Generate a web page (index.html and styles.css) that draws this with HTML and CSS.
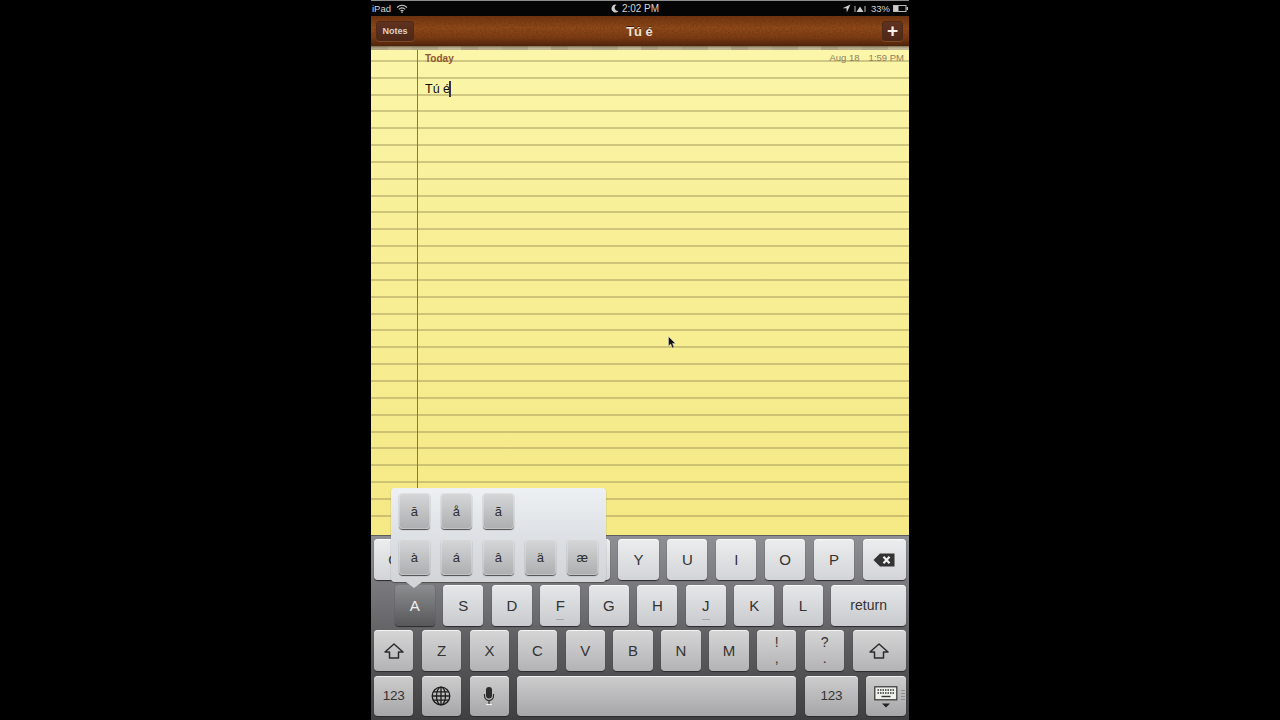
FILE: index.html
```html
<!DOCTYPE html>
<html lang="en">
<head>
<meta charset="utf-8">
<title>Notes</title>
<link rel="stylesheet" href="styles.css">
</head>
<body>
<div class="ipad">
  <div class="status">
    <div class="st-left">
      <span>iPad</span>
      <svg class="wifi" viewBox="0 0 12 9"><path d="M1 3.5C4 .8 8 .8 11 3.5M2.8 5.3C4.8 3.6 7.2 3.6 9.2 5.3M4.6 7C5.4 6.3 6.6 6.3 7.4 7" fill="none" stroke="#ccc" stroke-width="1.1"/><circle cx="6" cy="8.2" r=".8" fill="#ccc"/></svg>
    </div>
    <div class="st-mid">
      <svg class="moon" viewBox="0 0 8 9"><path d="M5.5 .8A3.9 3.9 0 1 0 7.5 7 3.3 3.3 0 0 1 5.5 .8Z" fill="#ccc"/></svg>
      <span>2:02 PM</span>
    </div>
    <div class="st-right">
      <svg class="loc" viewBox="0 0 9 9"><path d="M8.5 .5 .5 4.3H4.5L4.8 8.5Z" fill="#ccc"/></svg>
      <svg class="lock" viewBox="0 0 12 8"><path d="M1 1V7M11 1V7" stroke="#bbb" stroke-width="1"/><path d="M6 1.5 9.5 7H2.5Z" fill="#ccc"/></svg>
      <span>33%</span>
      <svg class="batt" viewBox="0 0 15 7"><rect x=".5" y=".5" width="12.5" height="6" fill="none" stroke="#bbb"/><rect x="1" y="1" width="4.5" height="5" fill="#ccc"/><rect x="13.5" y="2" width="1.5" height="3" fill="#bbb"/></svg>
    </div>
  </div>

  <div class="nav">
    <svg class="grain" aria-hidden="true"><filter id="leather"><feTurbulence type="fractalNoise" baseFrequency="0.55" numOctaves="2" seed="4"/><feColorMatrix values="0 0 0 0 .12  0 0 0 0 .03  0 0 0 0 0  1.6 0 0 0 -.55"/></filter><rect width="100%" height="100%" filter="url(#leather)"/></svg>
    <div class="nav-cell"><span class="nav-btn notes">Notes</span></div>
    <div class="title">Tú é</div>
    <div class="nav-cell end"><span class="nav-btn plus">+</span></div>
  </div>
  <div class="tear"></div>

  <div class="paper">
    <div class="meta">
      <span class="today">Today</span>
      <span class="date"><span>Aug 18</span><span>1:59 PM</span></span>
    </div>
    <div class="note"><span>Tú é</span><span class="caret"></span></div>
  </div>

  <div class="keyboard">
    <div class="row r1">
      <div class="key">Q</div><div class="key"></div><div class="key"></div><div class="key"></div><div class="key"></div><div class="key">Y</div><div class="key">U</div><div class="key">I</div><div class="key">O</div><div class="key">P</div>
      <div class="key grow">
        <svg class="ic-back" viewBox="0 0 22 14"><path d="M7 .5H21.5V13.5H7L.5 7Z" fill="#333"/><path d="M10.5 3.8 16.5 10.2M16.5 3.8 10.5 10.2" stroke="#f2f2f2" stroke-width="2.2"/></svg>
      </div>
    </div>
    <div class="row r2">
      <div class="key pressed">A</div><div class="key">S</div><div class="key">D</div><div class="key bump">F</div><div class="key">G</div><div class="key">H</div><div class="key bump">J</div><div class="key">K</div><div class="key">L</div>
      <div class="key grow word">return</div>
    </div>
    <div class="row r3">
      <div class="key wide">
        <svg class="ic-shift" viewBox="0 0 20 16"><path d="M10 1 19 9H14.5V15H5.500V9H1Z" fill="none" stroke="#2c2c2c" stroke-width="1.500" stroke-linejoin="round"/></svg>
      </div>
      <div class="key">Z</div><div class="key">X</div><div class="key">C</div><div class="key">V</div><div class="key">B</div><div class="key">N</div><div class="key">M</div>
      <div class="key punct"><span>!</span><span>,</span></div>
      <div class="key punct"><span>?</span><span>.</span></div>
      <div class="key grow">
        <svg class="ic-shift" viewBox="0 0 20 16"><path d="M10 1 19 9H14.5V15H5.500V9H1Z" fill="none" stroke="#2c2c2c" stroke-width="1.500" stroke-linejoin="round"/></svg>
      </div>
    </div>
    <div class="row r4">
      <div class="key wide num">123</div>
      <div class="key">
        <svg class="ic-globe" viewBox="0 0 20 20"><g fill="none" stroke="#1c1c1c" stroke-width="1.300"><circle cx="10" cy="10" r="8.800"/><ellipse cx="10" cy="10" rx="4.500" ry="8.800"/><path d="M10 1.200V18.800M1.200 10H18.800M2.500 5.800H17.500M2.500 14.200H17.500"/></g></svg>
      </div>
      <div class="key">
        <svg class="ic-mic" viewBox="0 0 12 20"><rect x="3" y="1" width="6" height="11.500" rx="3" fill="#2c2c2c"/><path d="M1.500 8V9.500C1.500 12.500 3.500 14.500 6 14.500S10.500 12.500 10.500 9.500V8M6 14.500V18" fill="none" stroke="#2c2c2c" stroke-width="1.200"/><path d="M3 18.500H9" stroke="#f2f2f2" stroke-width="1.200"/></svg>
      </div>
      <div class="key space"></div>
      <div class="key ret-num num">123</div>
      <div class="key grow kb-key">
        <svg class="ic-kb" viewBox="0 0 24 22"><rect x=".8" y=".8" width="22" height="13" fill="#eef0ea" stroke="#333" stroke-width="1.200"/><path d="M3.500 4H20.500M3.500 7H20.500" stroke="#333" stroke-width="1.400" stroke-dasharray="1.500 1"/><path d="M7.500 10.500H16.500" stroke="#333" stroke-width="1.400"/><path d="M8 17.500H16L12 21.500Z" fill="#222"/></svg>
      </div>
    </div>

    <div class="popup">
      <div class="pop-row">
        <div class="pop-key">ā</div><div class="pop-key">å</div><div class="pop-key">ã</div>
      </div>
      <div class="pop-row">
        <div class="pop-key">à</div><div class="pop-key">á</div><div class="pop-key">â</div><div class="pop-key">ä</div><div class="pop-key">æ</div>
      </div>
      <div class="pop-tail"></div>
    </div>
  </div>

  <svg class="cursor" viewBox="0 0 8 13"><path d="M.5 .5V10L2.700 8 4.300 12 6 11.300 4.500 7.500H7.500Z" fill="#111" stroke="#ddd" stroke-width=".5"/></svg>
</div>
</body>
</html>
```
FILE: styles.css
```css
* { box-sizing: border-box; }
html, body { margin: 0; height: 100%; background: #000; overflow: hidden; }
body { font-family: "Liberation Sans", Arial, sans-serif; }

.ipad {
  position: relative;
  width: 538px;
  height: 720px;
  margin: 0 auto;
  display: flex;
  flex-direction: column;
  background: #000;
}

/* status bar */
.status {
  height: 16px;
  flex: none;
  display: grid;
  grid-template-columns: 1fr auto 1fr;
  align-items: center;
  padding: 0 1px;
  background: #050505;
  border-top: 1px solid #8c8c8c;
  color: #d4d4d4;
  font-size: 9.5px;
  line-height: 14px;
}
.st-left, .st-mid, .st-right { display: flex; align-items: center; }
.st-left { gap: 5px; }
.st-mid { gap: 3px; padding-right: 10px; font-size: 10px; }
.st-right { justify-content: flex-end; gap: 3px; }
.wifi { width: 12px; height: 9px; }
.moon { width: 8px; height: 9px; }
.loc { width: 9px; height: 9px; }
.lock { width: 12px; height: 8px; margin-right: 2px; }
.batt { width: 15px; height: 7px; }

/* navigation */
.nav {
  position: relative;
  height: 30px;
  flex: none;
  display: grid;
  grid-template-columns: 1fr auto 1fr;
  align-items: center;
  padding: 0 6px 0 5px;
  background: linear-gradient(#6f3313, #914a1b 40%, #7c3b16 72%, #4a2110);
}
.grain { position: absolute; inset: 0; width: 100%; height: 100%; opacity: .6; }
.nav-cell { position: relative; display: flex; }
.nav-cell.end { justify-content: flex-end; }
.nav-btn {
  display: flex;
  align-items: center;
  justify-content: center;
  height: 20px;
  border-radius: 3px;
  background: linear-gradient(#603220, #4e2817);
  border: 1px solid #4f2a18;
  box-shadow: 0 1px 0 rgba(255, 220, 180, .15);
  color: #ddd2c6;
  font-weight: 700;
}
.notes { width: 38px; font-size: 9px; }
.plus { width: 21px; font-size: 19px; line-height: 20px; color: #f6f0ea; }
.title {
  position: relative;
  color: #efe3d8;
  font-weight: 700;
  font-size: 13px;
  text-shadow: 0 -1px 0 rgba(40, 15, 0, .7);
}

.tear {
  height: 4px;
  flex: none;
  background:
    linear-gradient(rgba(70, 50, 25, .55), transparent 50%),
    repeating-linear-gradient(90deg, #aca283 0 17px, #b8ae8e 17px 41px, #b0a688 41px 67px, #bfb796 67px 90px);
}

/* paper */
.paper {
  flex: 1;
  min-height: 0;
  padding: 3px 5px 0 54px;
  background-color: #f7ec8c;
  background-image:
    linear-gradient(90deg, transparent 45.5px, #7f7b52 45.5px, #7f7b52 46.500px, transparent 46.500px),
    repeating-linear-gradient(180deg, transparent 0 15.850px, #a4985c 15.850px 16.850px),
    linear-gradient(#fbf6a9, #f8ef98 35%, #f5e985 100%);
  background-position: 0 0, 0 -5.500px, 0 0;
}
.meta { display: flex; justify-content: space-between; height: 10px; font-size: 9.5px; line-height: 10px; }
.today { color: #94562f; font-weight: 700; font-size: 10px; line-height: 12px; }
.date { display: flex; gap: 9px; color: #8f7d66; }
.note {
  display: flex;
  align-items: center;
  height: 16px;
  margin-top: 18px;
  color: #111;
  font-size: 12.500px;
}
.caret { width: 2px; height: 16px; background: #34324c; margin-left: -1px; }

/* keyboard */
.keyboard {
  position: relative;
  height: 185px;
  flex: none;
  display: flex;
  flex-direction: column;
  gap: 4.500px;
  padding: 4px 3px 0;
  background: linear-gradient(#8f9095, #77777b 30%, #5c5c5f 60%, #3f3f41);
  box-shadow: inset 0 1px 0 #5d5d60;
}
.row { display: flex; height: 41px; }
.r1 { gap: 8.700px; }
.r2 { gap: 8.500px; padding-left: 20.800px; }
.r3 { gap: 8.600px; }
.r4 { gap: 8.500px; height: 40px; }

.key {
  flex: 0 0 40.200px;
  display: flex;
  align-items: center;
  justify-content: center;
  position: relative;
  border-radius: 4px;
  color: #333;
  font-size: 15px;
  line-height: 1;
  box-shadow: 0 1px 1px #2a2a2c, inset 0 1px 0 rgba(255, 255, 255, .7);
}
.r1 .key { background: linear-gradient(#eceded, #d3d4d8); }
.r2 .key { background: linear-gradient(#e6e7e9, #c9cacd); }
.r3 .key { background: linear-gradient(#d6d6d7, #b3b3b5); }
.r4 .key { background: linear-gradient(#cdcdce, #a6a6a8); }
.r2 .key { flex-basis: 40px; }
.r3 .key { flex-basis: 39.300px; }
.r4 .key { flex-basis: 39.300px; }
.r1 .key.grow, .r2 .key.grow, .r3 .key.grow, .r4 .key.grow { flex: 1 1 0; }
.r4 .key.space { flex: 0 0 279px; }
.r4 .key.ret-num { flex: 0 0 53px; }
.r2 .key.pressed {
  background: linear-gradient(#8c8d8f, #58585a);
  color: #f0f0f0;
  box-shadow: 0 1px 1px #2a2a2c;
}
.bump::after {
  content: "";
  position: absolute;
  left: 50%;
  bottom: 6px;
  width: 8px;
  height: 1px;
  margin-left: -4px;
  background: #a5a5a7;
}
.kb-key::after {
  content: "";
  position: absolute;
  right: 1px;
  top: 14px;
  width: 4px;
  height: 11px;
  background: repeating-linear-gradient(#8e8e90 0 1px, transparent 1px 3px);
}
.word { font-size: 14px; }
.num { font-size: 13.500px; letter-spacing: -.3px; }
.punct { flex-direction: column; gap: 1px; font-size: 14px; line-height: 15px; }
.ic-back { width: 22px; height: 14px; }
.ic-shift { width: 20px; height: 16px; }
.ic-globe { width: 20px; height: 20px; }
.ic-mic { width: 12px; height: 20px; }
.ic-kb { width: 24px; height: 22px; margin-top: 2px; }

/* accent popup */
.popup {
  position: absolute;
  left: 20px;
  top: -47px;
  width: 215px;
  height: 94px;
  display: flex;
  flex-direction: column;
  gap: 10px;
  padding: 5px 8px;
  border-radius: 4px;
  background: linear-gradient(#eef1f4, #dcdfe3 55%, #d2d4d8);
  box-shadow: 0 1px 1px #505052;
}
.pop-row { display: flex; gap: 11.500px; }
.pop-key {
  flex: 0 0 30.500px;
  height: 36px;
  display: flex;
  align-items: center;
  justify-content: center;
  border-radius: 4px;
  background: linear-gradient(#d6d7d8, #adaeb0);
  color: #2e2e30;
  font-size: 13px;
  box-shadow: 0 1px 1px #4a4a4c, inset 0 0 0 1px rgba(255, 255, 255, .25);
}
.pop-tail {
  position: absolute;
  left: 15px;
  bottom: -6px;
  width: 0;
  height: 0;
  border-left: 8px solid transparent;
  border-right: 8px solid transparent;
  border-top: 6px solid #d2d4d8;
}

/* mouse pointer over the screenshot */
.cursor { position: absolute; left: 297px; top: 336px; width: 8px; height: 13px; }
```
